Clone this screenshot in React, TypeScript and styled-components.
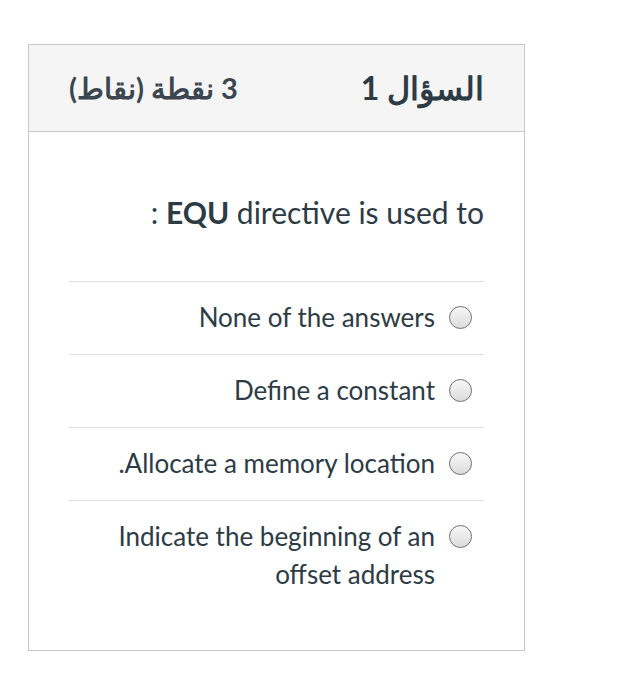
import React from 'react'
import styled, { createGlobalStyle } from 'styled-components'

const GlobalStyle = createGlobalStyle`
  html, body {
    margin: 0;
    padding: 0;
    background: #ffffff;
  }
  body {
    font-family: Lato, "Noto Sans", "Liberation Sans", sans-serif;
    color: #2d3b45;
  }
`

const Page = styled.div`
  padding: 44px 0 0 28px;
`

const Card = styled.div`
  direction: rtl;
  width: 495px;
  height: 605px;
  border: 1px solid #c4c8cb;
  background: #ffffff;
`

const Header = styled.div`
  display: flex;
  align-items: center;
  justify-content: space-between;
  height: 86px;
  padding: 0 40px;
  background: #f5f5f5;
  border-bottom: 1px solid #c4c8cb;
`

const QuestionName = styled.h2`
  margin: 0;
  font-size: 32px;
  font-weight: 700;
  font-family: Lato, "Noto Sans", sans-serif;
`

const Points = styled.div`
  font-size: 29px;
  font-weight: 700;
  color: #3b4650;
  font-family: Lato, "Noto Sans", sans-serif;
`

const Body = styled.div`
  padding: 60px 40px 0;
`

const QuestionText = styled.p`
  margin: 0 0 49px;
  font-size: 30px;
  line-height: 40px;

  strong {
    font-weight: 700;
  }
`

const Answers = styled.div`
  display: flex;
  flex-direction: column;
`

const Answer = styled.label`
  display: flex;
  align-items: flex-start;
  gap: 14px;
  padding: 16px 12px 18px;
  border-top: 1px solid #dcdfe1;
  font-size: 26px;
  line-height: 38px;
`

const Radio = styled.span`
  flex: none;
  width: 21px;
  height: 21px;
  margin-top: 8px;
  border: 1px solid #6b7074;
  border-radius: 50%;
  background: linear-gradient(180deg, #f7f7f7 0%, #dcdcdc 100%);
`

const AnswerLabel = styled.span`
  flex: 1;
  text-align: right;
`

const answers = [
  'None of the answers',
  'Define a constant',
  'Allocate a memory location.',
  'Indicate the beginning of an offset address',
]

export default function App() {
  return (
    <>
      <GlobalStyle />
      <Page>
        <Card>
          <Header>
            <QuestionName>السؤال 1</QuestionName>
            <Points>3 نقطة (نقاط)</Points>
          </Header>
          <Body>
            <QuestionText>
              <strong>EQU</strong> directive is used to :
            </QuestionText>
            <Answers>
              {answers.map(a => (
                <Answer key={a}>
                  <Radio />
                  <AnswerLabel>{a}</AnswerLabel>
                </Answer>
              ))}
            </Answers>
          </Body>
        </Card>
      </Page>
    </>
  )
}
